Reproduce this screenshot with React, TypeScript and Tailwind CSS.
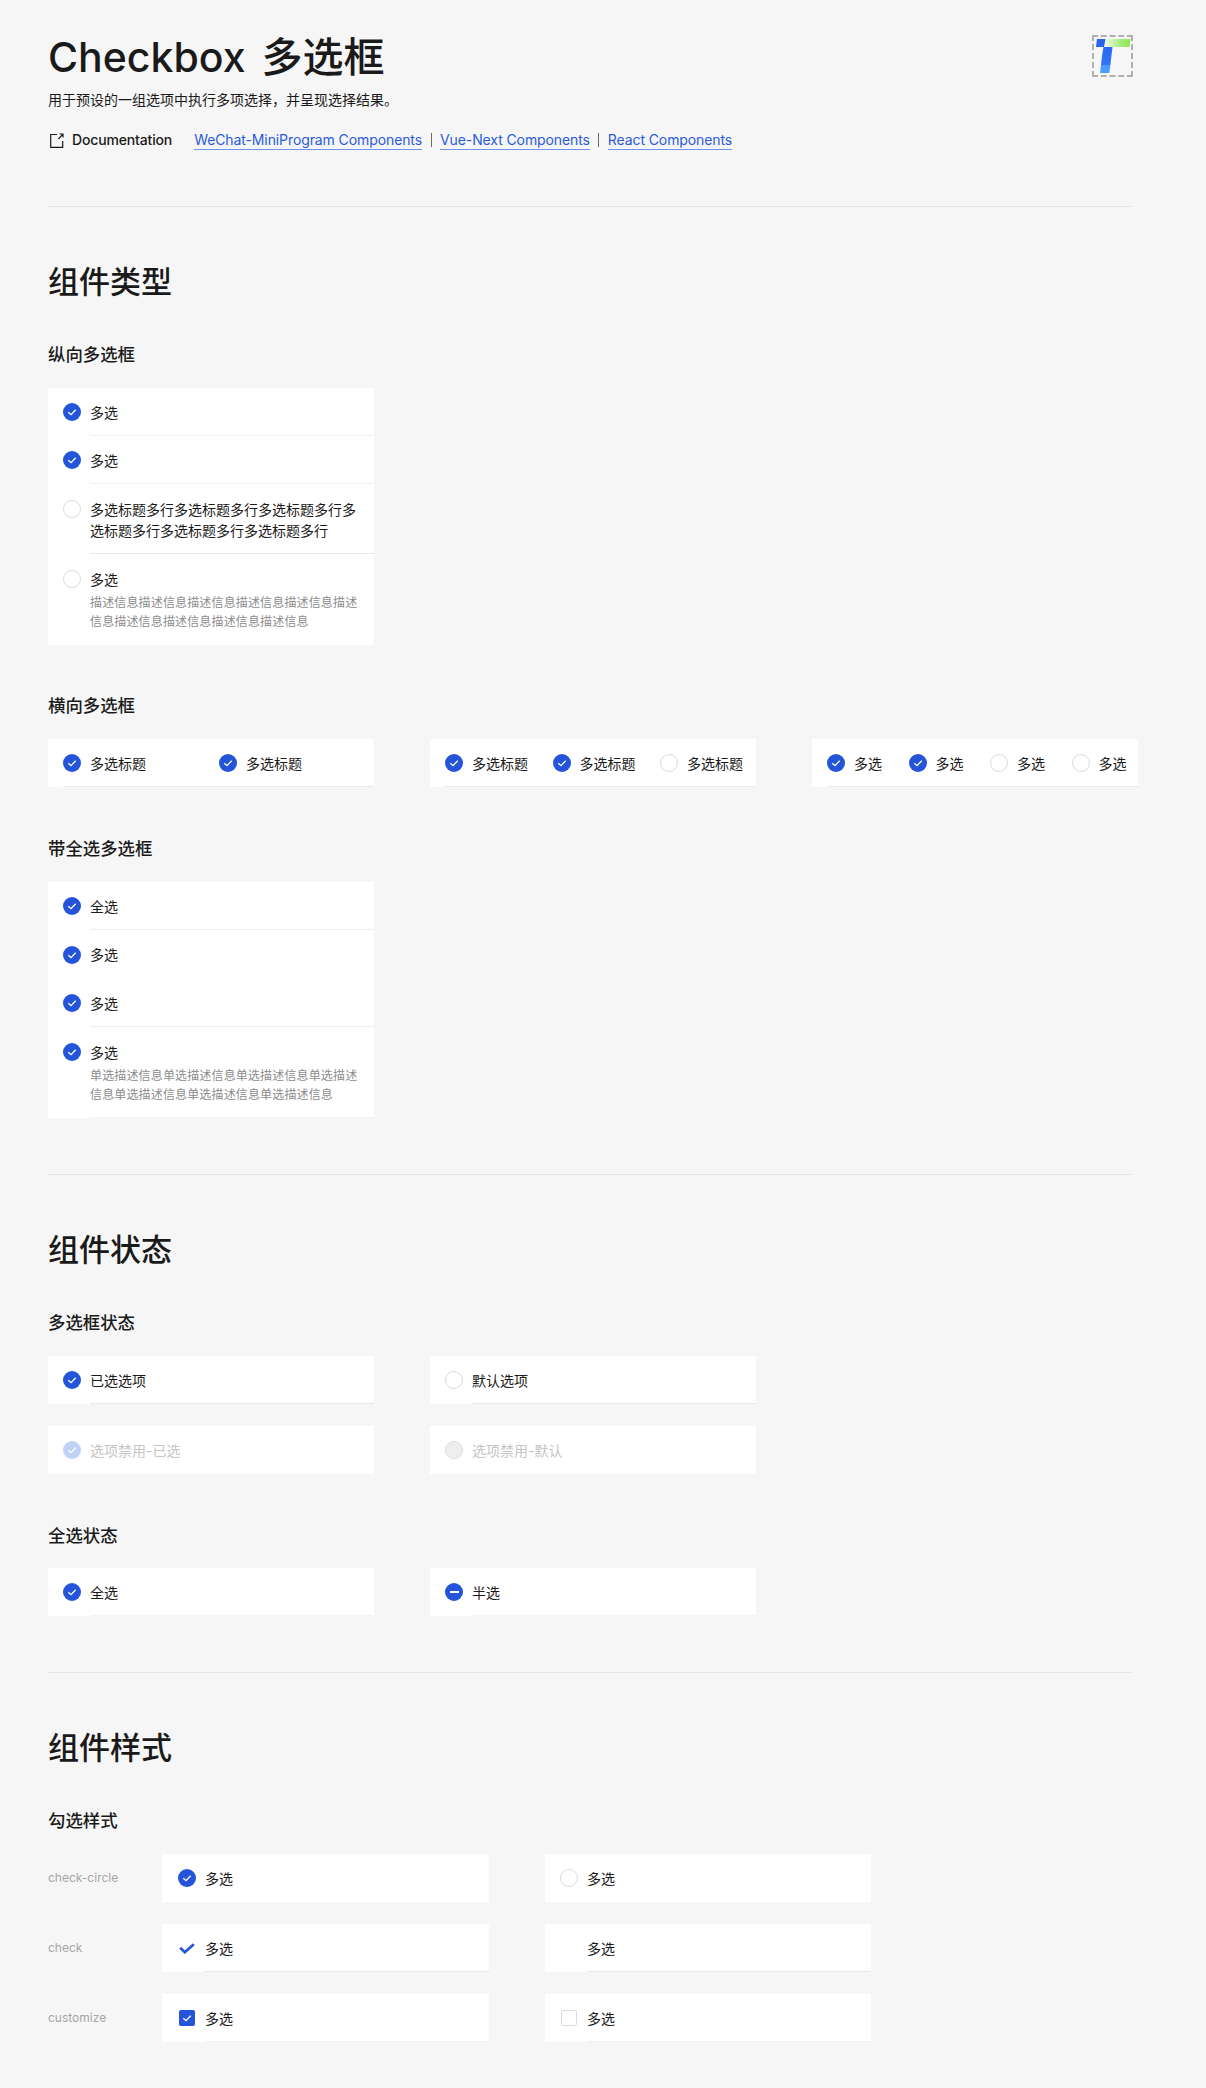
import React from 'react';

const FONT = '[font-family:Inter,"Noto_Sans_CJK_SC",sans-serif]';

type Mark = 'on' | 'off' | 'half' | 'disabled-on' | 'disabled-off' | 'tick' | 'none' | 'box-on' | 'box-off';
type Line = 'none' | 'soft' | 'mid' | 'hard';

const LINE: Record<Line, string> = {
  none: 'hidden',
  soft: 'bg-[#f3f3f3]',
  mid: 'bg-[#eeeeee]',
  hard: 'bg-[#e7e7e7]',
};

const Tick = () => (
  <svg width="10" height="10" viewBox="0 0 10 10" fill="none">
    <path d="M1.300 5.200 4 7.700 8.700 2.700" stroke="#fff" strokeWidth="1.300" />
  </svg>
);

const Icon = ({ mark }: { mark: Mark }) => {
  const base = 'flex h-[18px] w-[18px] shrink-0 items-center justify-center';
  if (mark === 'on')
    return (
      <span className={`${base} rounded-full bg-[#2354d9]`}>
        <Tick />
      </span>
    );
  if (mark === 'half')
    return (
      <span className={`${base} rounded-full bg-[#2354d9]`}>
        <span className="h-[2px] w-[9px] bg-white" />
      </span>
    );
  if (mark === 'disabled-on')
    return (
      <span className={`${base} rounded-full bg-[#c0d2f7]`}>
        <Tick />
      </span>
    );
  if (mark === 'disabled-off') return <span className={`${base} rounded-full border border-[#dcdcdc] bg-[#eeeeee]`} />;
  if (mark === 'tick')
    return (
      <span className={base}>
        <svg width="16" height="11" viewBox="0 0 16 11" fill="none">
          <path d="M1.200 4.800 5.800 9.300 14.800 1.200" stroke="#2354d9" strokeWidth="2.600" />
        </svg>
      </span>
    );
  if (mark === 'none') return <span className={base} />;
  if (mark === 'box-on')
    return (
      <span className={base}>
        <span className="flex h-4 w-4 items-center justify-center rounded-[2px] bg-[#2354d9]">
          <Tick />
        </span>
      </span>
    );
  if (mark === 'box-off')
    return (
      <span className={base}>
        <span className="h-4 w-4 rounded-[2px] border border-[#dcdcdc] bg-white" />
      </span>
    );
  return <span className={`${base} rounded-full border-[1.5px] border-[#dcdcdc] bg-white`} />;
};

const Opt = ({ mark, label, muted }: { mark: Mark; label: string; muted?: boolean }) => (
  <div className="flex h-full items-center">
    <span className="flex w-[27px] shrink-0 items-center">
      <Icon mark={mark} />
    </span>
    <span className={`text-sm leading-[21px] ${muted ? 'text-[#c5c5c5]' : 'text-[#1a1a1a]'}`}>{label}</span>
  </div>
);

// single option card; the hairline under it starts at the text
const Row = ({
  mark,
  label,
  muted,
  line = 'none',
  className = 'h-12 w-[326px] pl-[15px]',
}: {
  mark: Mark;
  label: string;
  muted?: boolean;
  line?: Line;
  className?: string;
}) => (
  <div className={`relative bg-white ${className}`}>
    <Opt mark={mark} label={label} muted={muted} />
    <div className={`absolute right-0 bottom-0 left-[42px] h-px ${LINE[line]}`} />
  </div>
);

const HRow = ({ width, items }: { width: string; items: [Mark, string][] }) => (
  <div className="relative flex h-12 w-[326px] bg-white pl-[15px]">
    {items.map(([mark, label], i) => (
      <div key={i} className={`shrink-0 ${width}`}>
        <Opt mark={mark} label={label} />
      </div>
    ))}
    <div className="absolute right-0 bottom-0 left-[15px] h-px bg-[#ececec]" />
  </div>
);

const Multi = ({
  mark,
  title,
  desc,
  line = 'none',
}: {
  mark: Mark;
  title: string;
  desc?: string;
  line?: Line;
}) => (
  <div className={`relative flex pt-[15px] pr-3 pl-[15px] ${desc ? 'pb-[14px]' : 'pb-[13px]'}`}>
    <span className="flex h-[19px] w-[27px] shrink-0 items-center">
      <Icon mark={mark} />
    </span>
    <div className="min-w-0">
      <p className="text-sm leading-[21px] text-[#1a1a1a]">{title}</p>
      {desc && <p className="mt-[3px] text-xs leading-[19px] tracking-[0.15px] text-[#8c8c8c]">{desc}</p>}
    </div>
    <div className={`absolute right-0 bottom-0 left-[42px] h-px ${LINE[line]}`} />
  </div>
);

const Section = ({ children }: { children: string }) => (
  <h2 className="text-[31px] leading-[44px] font-medium text-[#1a1a1a]">{children}</h2>
);

const Sub = ({ children, className = '' }: { children: string; className?: string }) => (
  <h3 className={`text-[17.4px] leading-[26px] font-medium text-[#1a1a1a] ${className}`}>{children}</h3>
);

const Logo = () => (
  <div className="h-[42px] w-[41px] border-2 border-dashed border-[#b0b0b0]">
    <svg width="37" height="38" viewBox="0 0 37 38">
      <defs>
        <linearGradient id="tbar" x1="0" x2="1" y1="0" y2="0">
          <stop offset="0" stopColor="#f2fbec" />
          <stop offset="0.6" stopColor="#a8ec7c" />
          <stop offset="1" stopColor="#86e84a" />
        </linearGradient>
      </defs>
      <path d="M3 2h8.500L10 10H2z" fill="#2a62f2" />
      <path d="M12 2h24.500L35.500 10H10.500z" fill="url(#tbar)" />
      <path d="M9.500 10H18.500L17.400 19H8z" fill="#2c6cf5" />
      <path d="M8 19H17.400L16.400 28H7z" fill="#2f72f7" />
      <path d="M7 28H16.400L15.300 36H6z" fill="#4a9cfb" />
    </svg>
  </div>
);

const links = ['WeChat-MiniProgram Components', 'Vue-Next Components', 'React Components'];

const styleRows: [string, Mark, Mark, Line][] = [
  ['check-circle', 'on', 'off', 'none'],
  ['check', 'tick', 'none', 'hard'],
  ['customize', 'box-on', 'box-off', 'soft'],
];

export default function App() {
  return (
    <div className={`min-h-[2088px] bg-[#f6f6f6] pt-[34px] pl-12 ${FONT}`}>
      {/* header */}
      <header className="relative w-[1085px] border-b border-[#e7e7e7] pb-[55px]">
        <h1 className="text-[41px] leading-[46px] font-medium text-[#1a1a1a] [word-spacing:5px]">Checkbox 多选框</h1>
        <p className="mt-[9px] text-sm leading-[22px] text-[#1a1a1a]">用于预设的一组选项中执行多项选择，并呈现选择结果。</p>
        <div className="mt-[18px] flex h-[22px] items-center text-sm">
          <svg className="ml-[2px]" width="14" height="15" viewBox="0 0 14 15" fill="none" stroke="#1a1a1a" strokeWidth="1.200">
            <path d="M7 1.500H.7v12.800h12V8M8.500 6 12.700 1.300M9.500 1h3.500v3.500" />
          </svg>
          <span className="ml-[8px] font-medium tracking-[-0.15px] text-[#1a1a1a]">Documentation</span>
          <div className="ml-[22px] flex items-center">
            {links.map((l, i) => (
              <React.Fragment key={l}>
                {i > 0 && <span className="mx-[8.5px] h-[14px] w-px bg-[#6b6b6b]" />}
                <a className="border-b border-[#6f93ea] leading-[18px] tracking-[-0.1px] text-[#2a5bdc]">{l}</a>
              </React.Fragment>
            ))}
          </div>
        </div>
        <div className="absolute top-[1px] right-0">
          <Logo />
        </div>
      </header>

      {/* 组件类型 */}
      <section className="w-[1085px] border-b border-[#e7e7e7] pt-[53px] pb-[56px]">
        <Section>组件类型</Section>
        <Sub className="mt-[38px]">纵向多选框</Sub>
        <div className="mt-[20px] w-[326px] bg-white">
          <Row mark="on" label="多选" line="soft" />
          <Row mark="on" label="多选" line="soft" />
          <Multi mark="off" title="多选标题多行多选标题多行多选标题多行多选标题多行多选标题多行多选标题多行" line="hard" />
          <Multi mark="off" title="多选" desc="描述信息描述信息描述信息描述信息描述信息描述信息描述信息描述信息描述信息描述信息" />
        </div>

        <Sub className="mt-[48px]">横向多选框</Sub>
        <div className="mt-[20px] flex gap-14">
          <HRow width="w-[156px]" items={[['on', '多选标题'], ['on', '多选标题']]} />
          <HRow width="w-[107.5px]" items={[['on', '多选标题'], ['on', '多选标题'], ['off', '多选标题']]} />
          <HRow width="w-[81.5px]" items={[['on', '多选'], ['on', '多选'], ['off', '多选'], ['off', '多选']]} />
        </div>

        <Sub className="mt-[49px]">带全选多选框</Sub>
        <div className="mt-[20px] w-[326px] bg-white">
          <Row mark="on" label="全选" line="mid" />
          <Row mark="on" label="多选" className="h-[49px] w-[326px] pl-[15px]" />
          <Row mark="on" label="多选" line="mid" />
          <Multi mark="on" title="多选" line="soft" desc="单选描述信息单选描述信息单选描述信息单选描述信息单选描述信息单选描述信息单选描述信息" />
        </div>
      </section>

      {/* 组件状态 */}
      <section className="w-[1085px] border-b border-[#e7e7e7] pt-[53px] pb-[56px]">
        <Section>组件状态</Section>
        <Sub className="mt-[38px]">多选框状态</Sub>
        <div className="mt-[20px] grid w-[708px] grid-cols-2 gap-x-14 gap-y-[22px]">
          <Row mark="on" label="已选选项" line="hard" />
          <Row mark="off" label="默认选项" line="hard" />
          <Row mark="disabled-on" label="选项禁用-已选" muted />
          <Row mark="disabled-off" label="选项禁用-默认" muted />
        </div>
        <Sub className="mt-[49px]">全选状态</Sub>
        <div className="mt-[19px] grid w-[708px] grid-cols-2 gap-x-14">
          <Row mark="on" label="全选" line="soft" />
          <Row mark="half" label="半选" line="soft" />
        </div>
      </section>

      {/* 组件样式 */}
      <section className="w-[1085px] pt-[53px]">
        <Section>组件样式</Section>
        <Sub className="mt-[38px]">勾选样式</Sub>
        <div className="mt-[20px] flex flex-col gap-[22px]">
          {styleRows.map(([name, a, b, line]) => (
            <div key={name} className="flex items-center">
              <span className="w-[114px] text-xs text-[#a6a6a6]">{name}</span>
              <div className="flex gap-14">
                <Row mark={a} label="多选" line={line} className="h-12 w-[327px] pl-4" />
                <Row mark={b} label="多选" line={line} className="h-12 w-[326px] pl-[15px]" />
              </div>
            </div>
          ))}
        </div>
      </section>
    </div>
  );
}
